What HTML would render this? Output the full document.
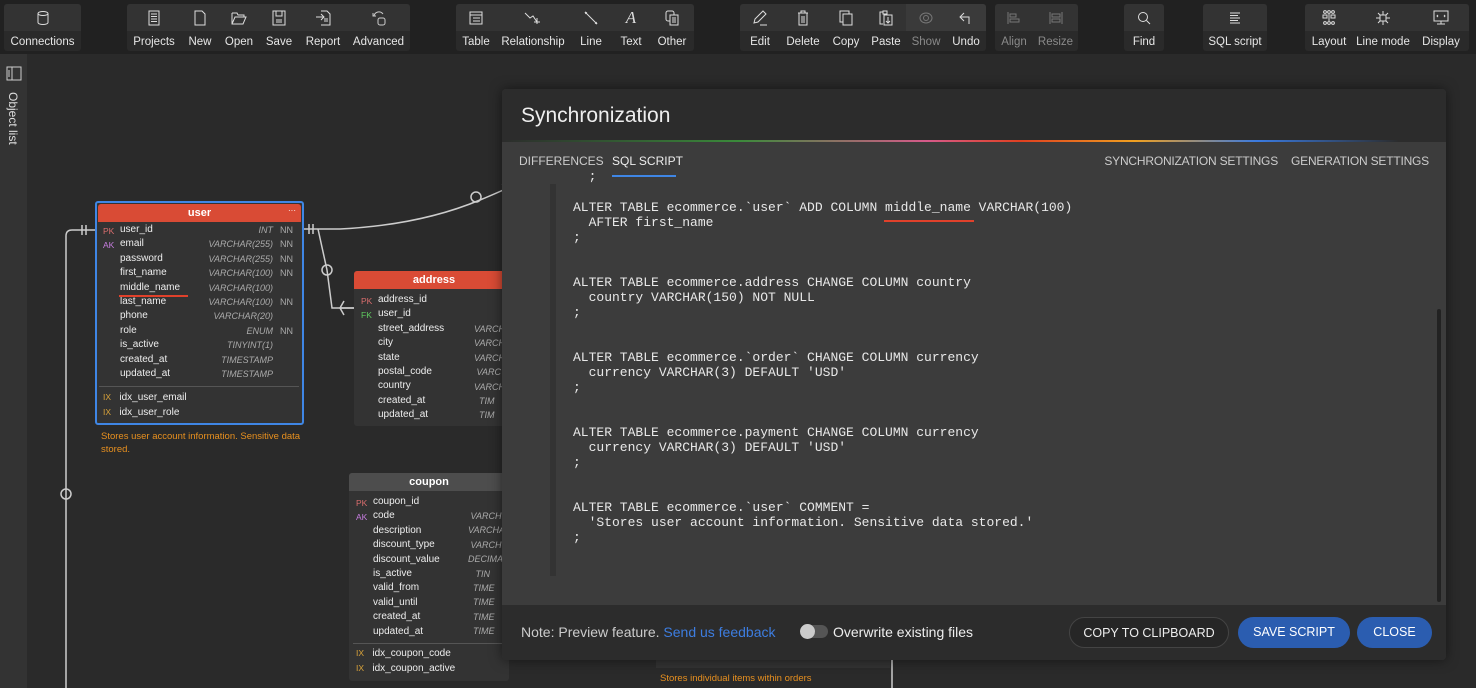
<!DOCTYPE html>
<html><head><meta charset="utf-8"><style>
*{box-sizing:border-box;margin:0;padding:0}
body{width:1476px;height:688px;overflow:hidden;background:#2a2a2a;font-family:"Liberation Sans",sans-serif;position:relative;color:#ddd}
.abs{position:absolute}
.top{left:0;top:0;width:1476px;height:54px;background:#212121}
.grp{position:absolute;top:4px;height:47px;background:#2a2a2a;border-radius:3px;display:flex;overflow:hidden}
.btn{height:47px;display:flex;flex-direction:column;align-items:center;justify-content:flex-start;font-size:11.5px;color:#e6e6e6;padding:0 5px}
.btn .ic{height:27px;width:100%;display:flex;align-items:center;justify-content:center;background:#333}
.btn .lb{height:20px;line-height:22px;white-space:nowrap}
.grp .btn .ic{margin:0 -5px;width:calc(100% + 10px)}
.dim{color:#8a8a8a}
svg{display:block}
.side{left:0;top:54px;width:27px;height:634px;background:#333}
.tbl{position:absolute;background:#333;border-radius:3px;font-size:10px}
.th{height:18px;border-radius:3px 3px 0 0;color:#fff;font-weight:bold;text-align:center;line-height:18px;font-size:11px}
.row{position:absolute;height:14px;line-height:14px;white-space:nowrap;color:#eee}
.dlg{left:502px;top:89px;width:944px;height:571px;background:#3c3c3c;border-radius:4px;box-shadow:0 0 12px rgba(0,0,0,.5);overflow:hidden}
.code{font-family:"Liberation Mono",monospace;font-size:13px;line-height:15px;color:#e8e8e8;white-space:pre;position:absolute;left:71px}
.pill{position:absolute;top:528px;height:31px;border-radius:16px;font-size:12.5px;line-height:31px;text-align:center;color:#fff;white-space:nowrap}
.tab{position:absolute;top:65px;font-size:12px;color:#ccc;white-space:nowrap}
</style></head><body>
<div class="abs top"></div>
<div class="grp" style="left:4px;width:77px"><div class="btn" style="width:77px"><div class="ic"><svg width="14" height="16" viewBox="0 0 14 16"><ellipse cx="7" cy="3.5" rx="5" ry="2" fill="none" stroke="#ddd"/><path d="M2 3.5v9c0 1.1 2.2 2 5 2s5-.9 5-2v-9" fill="none" stroke="#ddd"/></svg></div><div class="lb">Connections</div></div></div>
<div class="grp" style="left:127px;width:283px">
<div class="btn" style="width:54px"><div class="ic"><svg width="12" height="16"><rect x="1" y="1" width="10" height="14" fill="none" stroke="#ddd"/><path d="M3 4h6M3 6.5h6M3 9h6M3 11.5h6" stroke="#ddd"/></svg></div><div class="lb">Projects</div></div>
<div class="btn" style="width:38px"><div class="ic"><svg width="12" height="16"><path d="M1 1h7l3 3v11H1z" fill="none" stroke="#ddd"/></svg></div><div class="lb">New</div></div>
<div class="btn" style="width:40px"><div class="ic"><svg width="16" height="14"><path d="M1 2h5l1 2h6v2M1 2v11h11l3-7H4L1 13" fill="none" stroke="#ddd"/></svg></div><div class="lb">Open</div></div>
<div class="btn" style="width:40px"><div class="ic"><svg width="14" height="16"><rect x="1" y="1" width="12" height="14" fill="none" stroke="#ddd"/><path d="M4 1v5h6V1M4 10h6M4 12h6" fill="none" stroke="#ddd"/></svg></div><div class="lb">Save</div></div>
<div class="btn" style="width:48px"><div class="ic"><svg width="16" height="16"><path d="M6 1h6l3 3v11H6M1 7h8M6 4l3 3-3 3M9 9h4M9 11h4" fill="none" stroke="#ddd"/></svg></div><div class="lb">Report</div></div>
<div class="btn" style="width:63px"><div class="ic"><svg width="16" height="16"><path d="M3 6a5 5 0 0 1 9-2M2 3v3h3" fill="none" stroke="#ccc"/><rect x="7" y="8" width="7" height="7" rx="2" fill="none" stroke="#ccc"/></svg></div><div class="lb">Advanced</div></div>
</div>
<div class="grp" style="left:456px;width:238px">
<div class="btn" style="width:40px"><div class="ic"><svg width="14" height="14"><rect x="1" y="1" width="12" height="12" fill="none" stroke="#ddd"/><path d="M1 4h12M4 7h7M4 10h7" stroke="#ddd"/></svg></div><div class="lb">Table</div></div>
<div class="btn" style="width:74px"><div class="ic"><svg width="18" height="14"><path d="M1 2l5 5 3-2 4 6M13 7v6M10 11h6" fill="none" stroke="#ddd"/></svg></div><div class="lb">Relationship</div></div>
<div class="btn" style="width:42px"><div class="ic"><svg width="16" height="16"><path d="M2 2l12 12M2 2l2 1M2 2l1 2M14 14l-2-1M14 14l-1-2" fill="none" stroke="#ddd"/></svg></div><div class="lb">Line</div></div>
<div class="btn" style="width:38px"><div class="ic"><span style="font-family:'Liberation Serif',serif;font-style:italic;font-size:17px;color:#ddd">A</span></div><div class="lb">Text</div></div>
<div class="btn" style="width:44px"><div class="ic"><svg width="14" height="16"><rect x="1" y="1" width="8" height="10" rx="2" fill="none" stroke="#ddd"/><rect x="5" y="5" width="8" height="10" fill="#333" stroke="#ddd"/><path d="M7 8h4M7 10h4M7 12h4" stroke="#ddd"/></svg></div><div class="lb">Other</div></div>
</div>
<div class="grp" style="left:740px;width:246px">
<div class="btn" style="width:40px"><div class="ic"><svg width="16" height="16"><path d="M2 13l1-4 8-8 3 3-8 8zM8 15h7" fill="none" stroke="#ddd"/></svg></div><div class="lb">Edit</div></div>
<div class="btn" style="width:46px"><div class="ic"><svg width="12" height="16"><path d="M1 3h10M4 3V1h4v2M2 3v12h8V3M5 6v7M7 6v7" fill="none" stroke="#ddd"/></svg></div><div class="lb">Delete</div></div>
<div class="btn" style="width:40px"><div class="ic"><svg width="14" height="16"><rect x="1" y="1" width="9" height="11" fill="none" stroke="#ddd"/><rect x="4" y="4" width="9" height="11" fill="#333" stroke="#ddd"/></svg></div><div class="lb">Copy</div></div>
<div class="btn" style="width:40px"><div class="ic"><svg width="14" height="16"><path d="M4 2H1v12h3M4 1h4v3H4z" fill="none" stroke="#ddd"/><rect x="5" y="5" width="8" height="10" fill="none" stroke="#ddd"/><path d="M9 7v6M7 11l2 2 2-2" fill="none" stroke="#ddd"/></svg></div><div class="lb">Paste</div></div>
<div class="btn dim" style="width:40px"><div class="ic" style="background:#3a3a3a"><svg width="16" height="12"><ellipse cx="8" cy="6" rx="6" ry="5" fill="none" stroke="#777"/><circle cx="8" cy="6" r="2.5" fill="none" stroke="#777"/></svg></div><div class="lb">Show</div></div>
<div class="btn" style="width:40px"><div class="ic" style="background:#3a3a3a"><svg width="14" height="14"><path d="M5 2L1 6l4 4M1 6h9v7" fill="none" stroke="#ddd"/></svg></div><div class="lb">Undo</div></div>
</div>
<div class="grp" style="left:995px;width:83px">
<div class="btn dim" style="width:38px"><div class="ic"><svg width="14" height="14"><path d="M1 1v12M3 3h6v3H3zM3 8h9v3H3z" fill="none" stroke="#777"/></svg></div><div class="lb">Align</div></div>
<div class="btn dim" style="width:45px"><div class="ic"><svg width="14" height="14"><path d="M1 1v12M13 1v12M3 3h8v3H3zM3 8h8v3H3z" fill="none" stroke="#777"/></svg></div><div class="lb">Resize</div></div>
</div>
<div class="grp" style="left:1124px;width:40px"><div class="btn" style="width:40px"><div class="ic"><svg width="14" height="14"><circle cx="6" cy="6" r="4.5" fill="none" stroke="#ddd"/><path d="M9.5 9.5L13 13" stroke="#ddd"/></svg></div><div class="lb">Find</div></div></div>
<div class="grp" style="left:1203px;width:64px"><div class="btn" style="width:64px"><div class="ic"><svg width="12" height="12"><path d="M1 1h10M1 3.5h8M1 6h10M1 8.5h8M1 11h10" stroke="#ddd"/></svg></div><div class="lb">SQL script</div></div></div>
<div class="grp" style="left:1305px;width:164px">
<div class="btn" style="width:48px"><div class="ic"><svg width="14" height="16"><g fill="none" stroke="#ddd"><circle cx="3" cy="2" r="1.4"/><circle cx="7" cy="2" r="1.4"/><circle cx="11" cy="2" r="1.4"/><rect x="1" y="5" width="4" height="3"/><rect x="9" y="5" width="4" height="3"/><circle cx="3" cy="13" r="1.4"/><circle cx="7" cy="13" r="1.4"/><circle cx="11" cy="13" r="1.4"/><path d="M7 4v7"/></g></svg></div><div class="lb">Layout</div></div>
<div class="btn" style="width:60px"><div class="ic"><svg width="16" height="16"><g fill="none" stroke="#ddd"><rect x="5" y="5" width="6" height="6"/><path d="M8 1v4M8 11v4M1 8h4M11 8h4M3 3l2 2M13 3l-2 2M3 13l2-2M13 13l-2-2"/></g></svg></div><div class="lb">Line mode</div></div>
<div class="btn" style="width:56px"><div class="ic"><svg width="16" height="16"><g fill="none" stroke="#ddd"><rect x="1" y="1" width="14" height="10"/><path d="M4 14h8M8 11v3M5 5l-1 1 1 1M11 5l1 1-1 1"/></g></svg></div><div class="lb">Display</div></div>
</div>

<div class="abs side"><svg class="abs" style="left:6px;top:12px" width="16" height="16"><rect x="1" y="1" width="14" height="13" fill="none" stroke="#ccc"/><path d="M6 1v13M3 4v7" stroke="#ccc"/></svg>
<div class="abs" style="left:6px;top:38px;writing-mode:vertical-rl;font-size:12px;color:#ddd;white-space:nowrap">Object list</div></div>

<svg class="abs" style="left:0;top:0" width="1476" height="688">
<g fill="none" stroke="#ccc" stroke-width="1.5">
<path d="M95 230H72q-6 0-6 6V688"/><path d="M82 225v10M86 225v10"/>
<path d="M304 229H340Q420 225 480 200T502 185"/><path d="M309 224v10M313 224v10"/>
<circle cx="476" cy="197" r="5"/>
<path d="M318 229L327 270L332 308H354"/><circle cx="327" cy="270" r="5"/><path d="M344 301l-4 7 4 7M340 308h14"/>
<circle cx="66" cy="494" r="5"/>
<path d="M892 660V688"/>
</g></svg>

<div class="tbl" style="left:95px;top:201px;width:209px;height:224px;border:2px solid #3f86e5">
<div class="th" style="background:#d94b35;margin:1px 1px 0">user</div>
<span class="abs" style="right:6px;top:3px;font-size:8px;color:#fff">···</span>
</div>
<div class="abs" style="left:103px;top:224px;font-size:8.5px;line-height:14.4px"><span style="color:#d96d6d">PK</span><br><span style="color:#c77de0">AK</span></div>
<div class="abs" style="left:120px;top:223px;font-size:10px;line-height:14.4px;color:#eee">user_id<br>email<br>password<br>first_name<br>middle_name<br>last_name<br>phone<br>role<br>is_active<br>created_at<br>updated_at</div>
<div class="abs" style="left:180px;top:223px;width:93px;text-align:right;font-size:9px;font-style:italic;line-height:14.4px;color:#aaa">INT<br>VARCHAR(255)<br>VARCHAR(255)<br>VARCHAR(100)<br>VARCHAR(100)<br>VARCHAR(100)<br>VARCHAR(20)<br>ENUM<br>TINYINT(1)<br>TIMESTAMP<br>TIMESTAMP</div>
<div class="abs" style="left:280px;top:223px;font-size:9px;line-height:14.4px;color:#aaa">NN<br>NN<br>NN<br>NN<br><br>NN<br><br>NN</div>
<div class="abs" style="left:119px;top:295px;width:69px;height:2px;background:#e0412b"></div>
<div class="abs" style="left:99px;top:386px;width:200px;height:1px;background:#555"></div>
<div class="abs" style="left:103px;top:390px;font-size:10px;line-height:15px;color:#eee"><span style="color:#d9a33a;font-size:8.5px">IX</span>&nbsp;&nbsp; idx_user_email<br><span style="color:#d9a33a;font-size:8.5px">IX</span>&nbsp;&nbsp; idx_user_role</div>
<div class="abs" style="left:101px;top:430px;font-size:9.5px;line-height:13px;color:#e8901f;width:210px">Stores user account information. Sensitive data stored.</div>

<div class="tbl" style="left:354px;top:271px;width:160px;height:155px">
<div class="th" style="background:#d94b35">address</div></div>
<div class="abs" style="left:361px;top:294px;font-size:8.5px;line-height:14.4px"><span style="color:#d96d6d">PK</span><br><span style="color:#5fc95f">FK</span></div>
<div class="abs" style="left:378px;top:293px;font-size:10px;line-height:14.4px;color:#eee">address_id<br>user_id<br>street_address<br>city<br>state<br>postal_code<br>country<br>created_at<br>updated_at</div>
<div class="abs" style="left:474px;top:322px;font-size:9px;font-style:italic;line-height:14.4px;color:#aaa">VARCH<br>VARCH<br>VARCH<br>&nbsp;VARC<br>VARCH<br>&nbsp;&nbsp;TIM<br>&nbsp;&nbsp;TIM</div>

<div class="tbl" style="left:349px;top:473px;width:160px;height:208px">
<div class="th" style="background:#4d4d4d">coupon</div></div>
<div class="abs" style="left:356px;top:496px;font-size:8.5px;line-height:14.4px"><span style="color:#d96d6d">PK</span><br><span style="color:#c77de0">AK</span></div>
<div class="abs" style="left:373px;top:495px;font-size:10px;line-height:14.4px;color:#eee">coupon_id<br>code<br>description<br>discount_type<br>discount_value<br>is_active<br>valid_from<br>valid_until<br>created_at<br>updated_at</div>
<div class="abs" style="left:468px;top:509px;font-size:9px;font-style:italic;line-height:14.4px;color:#aaa">&nbsp;VARCH<br>VARCHA<br>&nbsp;VARCH<br>DECIMA<br>&nbsp;&nbsp;&nbsp;TIN<br>&nbsp;&nbsp;TIME<br>&nbsp;&nbsp;TIME<br>&nbsp;&nbsp;TIME<br>&nbsp;&nbsp;TIME</div>
<div class="abs" style="left:353px;top:643px;width:156px;height:1px;background:#555"></div>
<div class="abs" style="left:356px;top:646px;font-size:10px;line-height:15px;color:#eee"><span style="color:#d9a33a;font-size:8.5px">IX</span>&nbsp;&nbsp; idx_coupon_code<br><span style="color:#d9a33a;font-size:8.5px">IX</span>&nbsp;&nbsp; idx_coupon_active</div>
<div class="abs" style="left:656px;top:660px;width:234px;height:8px;background:#333"></div>
<div class="abs" style="left:660px;top:673px;font-size:9.5px;color:#e8901f">Stores individual items within orders</div>

<div class="abs dlg">
<div class="abs" style="left:0;top:0;width:944px;height:52px;background:#2c2c2c"></div>
<div class="abs" style="left:19px;top:15px;font-size:21px;color:#eee">Synchronization</div>
<div class="abs" style="left:0;top:51px;width:944px;height:2px;background:linear-gradient(90deg,#2c2c2c 0%,#3a8a3a 25%,#d65a8a 45%,#e04020 55%,#f0a020 67%,#3a7ae0 80%,#2c2c2c 95%)"></div>
<div class="tab" style="left:17px">DIFFERENCES</div>
<div class="tab" style="left:110px;color:#eee">SQL SCRIPT</div>
<div class="abs" style="left:110px;top:86px;width:64px;height:2px;background:#3f86e5"></div>
<div class="tab" style="right:168px;letter-spacing:-0.2px">SYNCHRONIZATION SETTINGS</div>
<div class="tab" style="right:17px;letter-spacing:-0.2px">GENERATION SETTINGS</div>
<div class="abs" style="left:48px;top:95px;width:6px;height:392px;background:#333"></div>
<div class="abs" style="left:935px;top:220px;width:4px;height:293px;background:#222;border-radius:2px"></div>
<div class="code" style="top:80px">  ;</div>
<div class="code" style="top:111px">ALTER TABLE ecommerce.`user` ADD COLUMN middle_name VARCHAR(100)
  AFTER first_name
;</div>
<div class="abs" style="left:382px;top:131px;width:90px;height:2px;background:#e0412b"></div>
<div class="code" style="top:186px">ALTER TABLE ecommerce.address CHANGE COLUMN country
  country VARCHAR(150) NOT NULL
;</div>
<div class="code" style="top:261px">ALTER TABLE ecommerce.`order` CHANGE COLUMN currency
  currency VARCHAR(3) DEFAULT 'USD'
;</div>
<div class="code" style="top:336px">ALTER TABLE ecommerce.payment CHANGE COLUMN currency
  currency VARCHAR(3) DEFAULT 'USD'
;</div>
<div class="code" style="top:411px">ALTER TABLE ecommerce.`user` COMMENT =
  'Stores user account information. Sensitive data stored.'
;</div>
<div class="abs" style="left:0;top:516px;width:944px;height:55px;background:#2c2c2c"></div>
<div class="abs" style="left:19px;top:535px;font-size:14px;color:#ccc">Note: Preview feature. <span style="color:#3d7de0">Send us feedback</span></div>
<div class="abs" style="left:299px;top:536px;width:27px;height:13px;border-radius:7px;background:#555"></div>
<div class="abs" style="left:298px;top:535px;width:15px;height:15px;border-radius:8px;background:#ccc"></div>
<div class="abs" style="left:331px;top:535px;font-size:14px;color:#eee">Overwrite existing files</div>
<div class="pill" style="left:567px;width:160px;background:#262626;border:1px solid #444;color:#eee">COPY TO CLIPBOARD</div>
<div class="pill" style="left:736px;width:112px;background:#2b5db0">SAVE SCRIPT</div>
<div class="pill" style="left:855px;width:75px;background:#2b5db0">CLOSE</div>
</div>
</body></html>
